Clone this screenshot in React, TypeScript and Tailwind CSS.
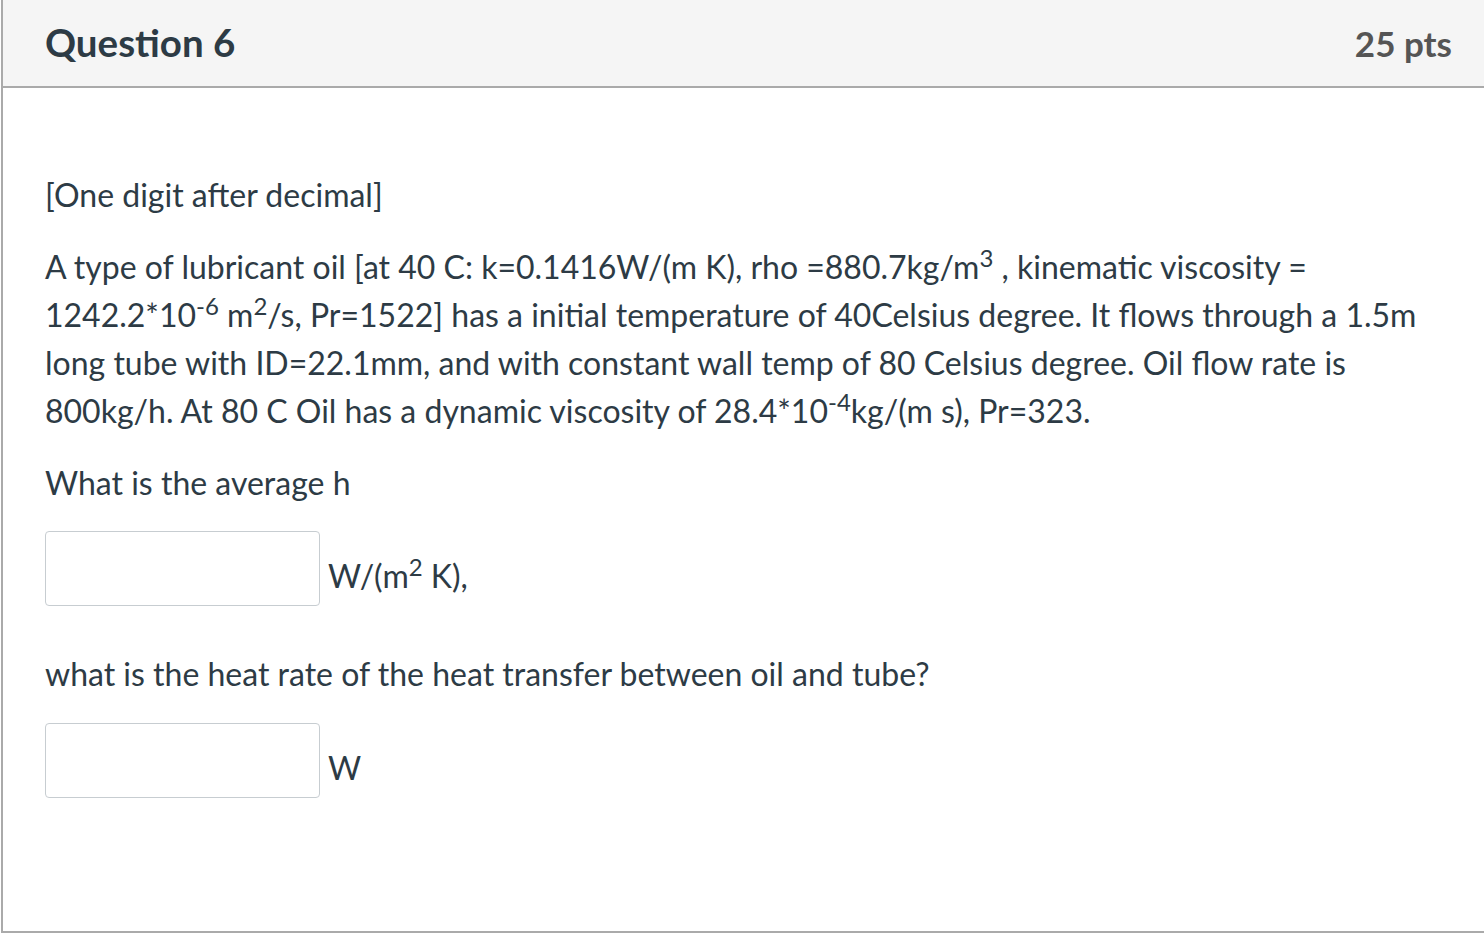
export default function App() {
  return (
    <div className="min-h-screen bg-white font-['Lato','Liberation_Sans',sans-serif] text-[#2d3b45]">
      <div className="ml-px w-[1483px] h-[933px] border-l-2 border-b-2 border-[#aaaaaa] flex flex-col">
        <div className="h-[88px] shrink-0 bg-[#f5f5f5] border-b-2 border-[#aaaaaa] flex items-center justify-between pl-[42px] pr-[32px]">
          <h2 className="text-[38.5px] font-bold text-[#2d3b45]">Question 6</h2>
          <span className="text-[35px] font-bold text-[#555555]">25 pts</span>
        </div>

        <div className="pl-[42px] pr-[42px] pt-[83px] text-[32px] leading-[48px]">
          <p>[One digit after decimal]</p>
          <p className="mt-6">
            A type of lubricant oil [at 40 C: k=0.1416W/(m K), rho =880.7kg/m<sup>3</sup> , kinematic viscosity =
            1242.2*10<sup>-6</sup> m<sup>2</sup>/s, Pr=1522] has a initial temperature of 40Celsius degree. It flows
            through a 1.5m long tube with ID=22.1mm, and with constant wall temp of 80 Celsius degree. Oil flow rate is
            800kg/h. At 80 C Oil has a dynamic viscosity of 28.4*10<sup>-4</sup>kg/(m s), Pr=323.
          </p>
          <p className="mt-6">What is the average h</p>
          <div className="mt-6 flex items-center gap-2">
            <input
              type="text"
              className="w-[275px] h-[75px] border border-[#c7cdd1] rounded-[4px] bg-white outline-none"
            />
            <span className="mt-[14px]">
              W/(m<sup>2</sup> K),
            </span>
          </div>
          <p className="mt-[44px]">what is the heat rate of the heat transfer between oil and tube?</p>
          <div className="mt-[25px] flex items-center gap-2">
            <input
              type="text"
              className="w-[275px] h-[75px] border border-[#c7cdd1] rounded-[4px] bg-white outline-none"
            />
            <span className="mt-[14px]">W</span>
          </div>
        </div>
      </div>
    </div>
  );
}
